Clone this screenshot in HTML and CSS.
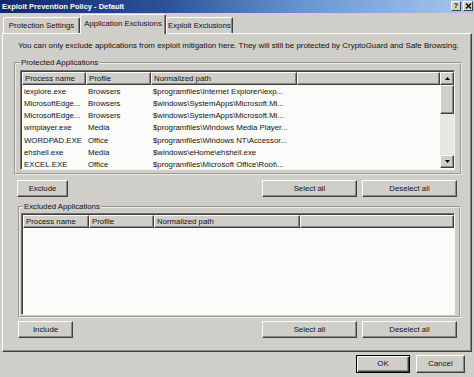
FILE: index.html
```html
<!DOCTYPE html>
<html>
<head>
<meta charset="utf-8">
<link rel="stylesheet" href="styles.css">
</head>
<body>
<div class="window">
  <div class="titlebar">
    <span class="title">Exploit Prevention Policy - Default</span>
    <div class="tb-btns">
      <span class="tb-btn">?</span>
      <span class="tb-btn">
        <svg width="7" height="6" viewBox="0 0 7 6"><path d="M1 0.5 L6 5.5 M6 0.5 L1 5.5" stroke="#000" stroke-width="1.4"/></svg>
      </span>
    </div>
  </div>

  <div class="tabs">
    <div class="tab t1">Protection Settings</div>
    <div class="tab t2 active">Application Exclusions</div>
    <div class="tab t3">Exploit Exclusions</div>
  </div>

  <div class="panel">
    <p class="desc">You can only exclude applications from exploit mitigation here. They will still be protected by CryptoGuard and Safe Browsing.</p>

    <fieldset class="group g1">
      <legend>Protected Applications</legend>
      <div class="list list1">
        <div class="list-main">
          <div class="hdr">
            <div class="hc c1">Process name</div>
            <div class="hc c2">Profile</div>
            <div class="hc c3">Normalized path</div>
            <div class="hc c4"></div>
          </div>
          <div class="rows">
            <div class="row"><span class="c1">iexplore.exe</span><span class="c2">Browsers</span><span class="c3">$programfiles\Internet Explorer\iexp...</span></div>
            <div class="row"><span class="c1">MicrosoftEdge...</span><span class="c2">Browsers</span><span class="c3">$windows\SystemApps\Microsoft.Mi...</span></div>
            <div class="row"><span class="c1">MicrosoftEdge...</span><span class="c2">Browsers</span><span class="c3">$windows\SystemApps\Microsoft.Mi...</span></div>
            <div class="row"><span class="c1">wmplayer.exe</span><span class="c2">Media</span><span class="c3">$programfiles\Windows Media Player...</span></div>
            <div class="row"><span class="c1">WORDPAD.EXE</span><span class="c2">Office</span><span class="c3">$programfiles\Windows NT\Accessor...</span></div>
            <div class="row"><span class="c1">ehshell.exe</span><span class="c2">Media</span><span class="c3">$windows\eHome\ehshell.exe</span></div>
            <div class="row"><span class="c1">EXCEL.EXE</span><span class="c2">Office</span><span class="c3">$programfiles\Microsoft Office\Root\...</span></div>
          </div>
        </div>
        <div class="vscroll">
          <div class="sbtn"><svg width="5" height="3" viewBox="0 0 5 3"><path d="M2.5 0 L5 3 L0 3 Z" fill="#000"/></svg></div>
          <div class="thumb"></div>
          <div class="track"></div>
          <div class="sbtn"><svg width="5" height="3" viewBox="0 0 5 3"><path d="M0 0 L5 0 L2.5 3 Z" fill="#000"/></svg></div>
        </div>
      </div>
    </fieldset>

    <div class="btnrow r1">
      <button class="btn b-exclude">Exclude</button>
      <div class="spacer"></div>
      <button class="btn b-wide">Select all</button>
      <button class="btn b-wide">Deselect all</button>
    </div>

    <fieldset class="group g2">
      <legend>Excluded Applications</legend>
      <div class="list list2">
        <div class="list-main">
          <div class="hdr">
            <div class="hc c1">Process name</div>
            <div class="hc c2">Profile</div>
            <div class="hc c3">Normalized path</div>
            <div class="hc c4"></div>
          </div>
          <div class="rows"></div>
        </div>
      </div>
    </fieldset>

    <div class="btnrow r2">
      <button class="btn b-include">Include</button>
      <div class="spacer"></div>
      <button class="btn b-wide">Select all</button>
      <button class="btn b-wide">Deselect all</button>
    </div>
  </div>

  <div class="footer">
    <button class="btn b-ok">OK</button>
    <button class="btn b-cancel">Cancel</button>
  </div>
</div>
</body>
</html>
```

FILE: styles.css
```css
* { box-sizing: border-box; }
html, body { margin: 0; padding: 0; }
body {
  width: 474px;
  height: 377px;
  overflow: hidden;
  background: #d0cec8;
  font-family: "Liberation Sans", Arial, sans-serif;
  font-size: 7.8px;
  color: #111;
}
.window { width: 474px; height: 377px; }

/* title bar */
.titlebar {
  height: 13px;
  background: linear-gradient(to right, #10286a 0%, #2c539a 35%, #6a98d2 65%, #a8c8ee 100%);
  display: flex;
  align-items: center;
  justify-content: space-between;
  padding: 0 1px 0 2px;
}
.title {
  color: #fff;
  font-weight: bold;
  font-size: 7.5px;
  line-height: 10px;
}
.tb-btns { display: flex; gap: 2px; align-self: flex-start; padding-top: 1px; }
.tb-btn {
  width: 10px;
  height: 10px;
  background: #d4d0c8;
  border: 1px solid;
  border-color: #fff #404040 #404040 #fff;
  font-weight: bold;
  font-size: 7px;
  line-height: 8px;
  display: flex;
  align-items: center;
  justify-content: center;
}

/* tabs */
.tabs {
  height: 20px;
  display: flex;
  align-items: flex-end;
  padding-left: 3px;
  position: relative;
  z-index: 1;
}
.tab {
  height: 16px;
  background: #d0cec8;
  border: 1px solid;
  border-bottom: none;
  border-color: #fff #404040 transparent #fff;
  box-shadow: inset -1px 0 0 #888;
  border-radius: 2px 2px 0 0;
  display: flex;
  align-items: center;
  justify-content: center;
  white-space: nowrap;
}
.t1 { width: 77px; }
.t2 { width: 86px; }
.t3 { width: 67px; }
.tab.active {
  height: 20px;
  margin-bottom: -1px;
  padding-bottom: 2px;
}

/* panel */
.panel {
  margin-left: 2px;
  width: 470px;
  height: 319px;
  border: 1px solid;
  border-color: #fff #404040 #404040 #fff;
  box-shadow: inset -1px -1px 0 #8a8884;
}
.desc {
  margin: 7px 0 0 15px;
  line-height: 10px;
  font-size: 7.95px;
  white-space: nowrap;
}

/* group boxes */
.group {
  margin: 0;
  min-width: 0;
  border: 2px groove #ecebe6;
  padding: 0;
}
.group legend {
  padding: 0 1px;
  line-height: 10px;
}
.g1 {
  margin: 7px 0 0 11px;
  width: 448px;
  padding: 2px 5px 3px 4px;
}
.g2 {
  margin: 5px 0 0 15px;
  width: 443px;
  padding: 1px 4px 1px 1px;
}
.g2 legend { margin-left: 2px; }

/* lists */
.list {
  display: flex;
  background: #fbfcfa;
  border: 1px solid;
  border-color: #707070 #f4f4f0 #f4f4f0 #707070;
  box-shadow: inset 1px 1px 0 #404040;
  padding: 1px 0 0 1px;
}
.list1 { width: 435px; height: 100px; padding-bottom: 1px; }
.list2 { width: 434px; height: 102px; }
.list-main { flex: 1; display: flex; flex-direction: column; min-width: 0; }
.hdr { display: flex; height: 13px; }
.hc {
  height: 13px;
  background: #d0cec8;
  border-top: 1px solid #fff;
  border-left: 1px solid #fff;
  border-right: 1px solid #404040;
  border-bottom: 1px solid #404040;
  box-shadow: inset -1px -1px 0 #888;
  padding-left: 2px;
  line-height: 11px;
  white-space: nowrap;
}
.c1, .c2, .c3 { flex: none; }
.list1 .c1 { width: 64px; }
.list1 .c2 { width: 65px; }
.list1 .c3 { width: 146px; }
.list2 .c1 { width: 66px; }
.list2 .c2 { width: 65px; }
.list2 .c3 { width: 146px; }
.hc.c4 { flex: 1; }
.rows { padding-top: 0.5px; }
.row {
  display: flex;
  height: 12.3px;
  line-height: 12.3px;
  white-space: nowrap;
}
.row span { padding-left: 2px; overflow: hidden; }

/* scrollbar */
.vscroll {
  width: 14px;
  display: flex;
  flex-direction: column;
  background: #e9e7e1;
}
.sbtn {
  height: 13px;
  background: #d0cec8;
  border: 1px solid;
  border-color: #fff #404040 #404040 #fff;
  box-shadow: inset -1px -1px 0 #888;
  display: flex;
  align-items: center;
  justify-content: center;
}
.thumb {
  height: 29px;
  background: #d0cec8;
  border: 1px solid;
  border-color: #fff #404040 #404040 #fff;
  box-shadow: inset -1px -1px 0 #888;
}
.track { flex: 1; }

/* buttons */
.btn {
  font: inherit;
  color: #111;
  height: 17px;
  padding: 0;
  background: #d0cec8;
  border: 1px solid;
  border-color: #fff #404040 #404040 #fff;
  box-shadow: inset -1px -1px 0 #888;
  line-height: 14px;
  text-align: center;
}
.btnrow { display: flex; gap: 5px; }
.btnrow .spacer { flex: 1; }
.r1 { margin: 5px 0 0 14px; width: 440px; }
.r2 { margin: 3px 0 0 15px; width: 439px; }
.b-exclude { width: 51px; }
.b-include { width: 55px; }
.b-wide { width: 95px; }

.footer {
  display: flex;
  justify-content: flex-end;
  gap: 6px;
  padding: 3px 9px 0 0;
}
.b-ok {
  width: 54px;
  height: 18px;
  border: 1px solid #000;
  box-shadow: inset 1px 1px 0 #fff, inset -1px -1px 0 #404040, inset -2px -2px 0 #888;
}
.b-cancel { width: 49px; height: 18px; }
```
